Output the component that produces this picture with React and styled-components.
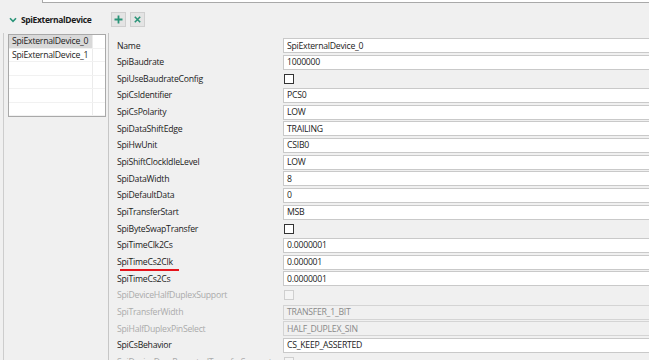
import React from 'react';
import styled, { createGlobalStyle } from 'styled-components';

const Global = createGlobalStyle`
  *, *::before, *::after { box-sizing: border-box; }
  html, body { margin: 0; padding: 0; background: #f0f0f0; }
  body { font-family: "Open Sans", "Noto Sans", sans-serif; }
`;

const Screen = styled.div`
  width: 649px;
  height: 360px;
  overflow: hidden;
  background: #f0f0f0;
  display: flex;
  flex-direction: column;
  font-family: "Open Sans", "Noto Sans", sans-serif;
  font-size: 8.7px;
  letter-spacing: -0.25px;
  color: #1b1b1b;
`;

const TopStrip = styled.div`
  display: flex;
  height: 3px;
  flex: none;
`;
const TopGap = styled.div`
  width: 42px;
`;
const TopEdge = styled.div`
  flex: 1;
  background: #ffffff;
  border-left: 1px solid #a9a9a9;
  border-bottom: 1px solid #a9a9a9;
`;

const Header = styled.div`
  height: 30px;
  flex: none;
  display: flex;
  align-items: center;
  padding-top: 3px;
`;
const TitleBlock = styled.div`
  width: 111px;
  display: flex;
  align-items: center;
  padding-left: 9px;
  gap: 4px;
`;
const Title = styled.span`
  font-weight: 700;
  font-size: 8.5px;
  letter-spacing: -0.35px;
  color: #1b1b1b;
`;
const Tools = styled.div`
  display: flex;
  gap: 4px;
`;
const ToolButton = styled.div`
  width: 15px;
  height: 15px;
  border: 1px solid #cfcfcf;
  background: #e4e4e4;
  display: flex;
  align-items: center;
  justify-content: center;
`;

const Body = styled.div`
  flex: 1;
  display: flex;
  margin-left: 3px;
  border-left: 1px solid #cdcdcd;
  min-height: 0;
`;
const LeftPanel = styled.div`
  width: 105px;
  flex: none;
  border-right: 1px solid #c6c6c6;
  padding: 1px 0 0 4px;
`;
const ListBox = styled.div`
  width: 98px;
  height: 83px;
  border: 1px solid #a9a9a9;
  background: #ffffff;
  display: flex;
  flex-direction: column;
  overflow: hidden;
`;
const ListRow = styled.div`
  height: 13.5px;
  flex: none;
  display: grid;
  grid-template-columns: 84px 1fr;
  border-bottom: 1px solid #f1f1f1;
`;
const ListCell = styled.div`
  display: flex;
  align-items: center;
  padding-left: 3px;
  white-space: nowrap;
  background: ${p => (p.$selected ? '#d9d9d9' : 'transparent')};
  border-right: 1px solid #ebebeb;
`;
const ListPad = styled.div``;

const PropGrid = styled.div`
  flex: 1;
  display: grid;
  grid-template-columns: 166px 1fr;
  grid-auto-rows: 16.667px;
  align-items: center;
  padding: 4.2px 0 0 8px;
  align-content: start;
`;
const Label = styled.div`
  position: relative;
  white-space: nowrap;
  color: ${p => (p.$disabled ? '#ababab' : '#1b1b1b')};
  ${p =>
    p.$marked
      ? `&::after {
          content: '';
          position: absolute;
          left: 3px;
          width: 59px;
          top: calc(100% + 1px);
          height: 1.6px;
          background: #e5131b;
        }`
      : ''}
`;
const Field = styled.div`
  height: 15px;
  border: 1px solid ${p => (p.$disabled ? '#d4d4d4' : '#c9c9c9')};
  border-right: none;
  background: ${p => (p.$disabled ? '#f0f0f0' : '#ffffff')};
  color: ${p => (p.$disabled ? '#8a8a8a' : '#1b1b1b')};
  display: flex;
  align-items: center;
  padding-left: 3px;
  white-space: nowrap;
`;
const Check = styled.div`
  width: 10px;
  height: 10px;
  margin-left: 1px;
  border: 1px solid ${p => (p.$disabled ? '#cfcfcf' : '#333333')};
  background: ${p => (p.$disabled ? '#f4f4f4' : '#ffffff')};
`;

const TEAL = '#2a9478';

const Chevron = () => (
  <svg width="8" height="6" viewBox="0 0 8 6">
    <path d="M1 1.2 L4 4.3 L7 1.2" fill="none" stroke={TEAL} strokeWidth="1.6" />
  </svg>
);
const PlusIcon = () => (
  <svg width="9" height="9" viewBox="0 0 9 9">
    <path d="M4.5 0.5 V8.5 M0.5 4.5 H8.5" fill="none" stroke={TEAL} strokeWidth="1.8" />
  </svg>
);
const CloseIcon = () => (
  <svg width="7" height="7" viewBox="0 0 7 7">
    <path d="M0.8 0.8 L6.2 6.2 M6.2 0.8 L0.8 6.2" fill="none" stroke={TEAL} strokeWidth="1.6" />
  </svg>
);

const props = [
  { name: 'Name', value: 'SpiExternalDevice_0' },
  { name: 'SpiBaudrate', value: '1000000' },
  { name: 'SpiUseBaudrateConfig', check: true },
  { name: 'SpiCsIdentifier', value: 'PCS0' },
  { name: 'SpiCsPolarity', value: 'LOW' },
  { name: 'SpiDataShiftEdge', value: 'TRAILING' },
  { name: 'SpiHwUnit', value: 'CSIB0' },
  { name: 'SpiShiftClockIdleLevel', value: 'LOW' },
  { name: 'SpiDataWidth', value: '8' },
  { name: 'SpiDefaultData', value: '0' },
  { name: 'SpiTransferStart', value: 'MSB' },
  { name: 'SpiByteSwapTransfer', check: true },
  { name: 'SpiTimeClk2Cs', value: '0.0000001' },
  { name: 'SpiTimeCs2Clk', value: '0.000001', marked: true },
  { name: 'SpiTimeCs2Cs', value: '0.0000001' },
  { name: 'SpiDeviceHalfDuplexSupport', check: true, disabled: true },
  { name: 'SpiTransferWidth', value: 'TRANSFER_1_BIT', disabled: true },
  { name: 'SpiHalfDuplexPinSelect', value: 'HALF_DUPLEX_SIN', disabled: true },
  { name: 'SpiCsBehavior', value: 'CS_KEEP_ASSERTED' },
  { name: 'SpiDeviceDmaRepeatedTransferSupport', check: true, disabled: true },
];

const items = ['SpiExternalDevice_0', 'SpiExternalDevice_1', '', '', '', ''];

export default function App() {
  return (
    <Screen>
      <Global />
      <TopStrip>
        <TopGap />
        <TopEdge />
      </TopStrip>
      <Header>
        <TitleBlock>
          <Chevron />
          <Title>SpiExternalDevice</Title>
        </TitleBlock>
        <Tools>
          <ToolButton>
            <PlusIcon />
          </ToolButton>
          <ToolButton>
            <CloseIcon />
          </ToolButton>
        </Tools>
      </Header>
      <Body>
        <LeftPanel>
          <ListBox>
            {items.map((it, i) => (
              <ListRow key={i}>
                <ListCell $selected={i === 0}>{it}</ListCell>
                <ListPad />
              </ListRow>
            ))}
          </ListBox>
        </LeftPanel>
        <PropGrid>
          {props.map(p => (
            <React.Fragment key={p.name}>
              <Label $disabled={p.disabled} $marked={p.marked}>
                {p.name}
              </Label>
              {p.check ? (
                <Check $disabled={p.disabled} />
              ) : (
                <Field $disabled={p.disabled}>{p.value}</Field>
              )}
            </React.Fragment>
          ))}
        </PropGrid>
      </Body>
    </Screen>
  );
}
